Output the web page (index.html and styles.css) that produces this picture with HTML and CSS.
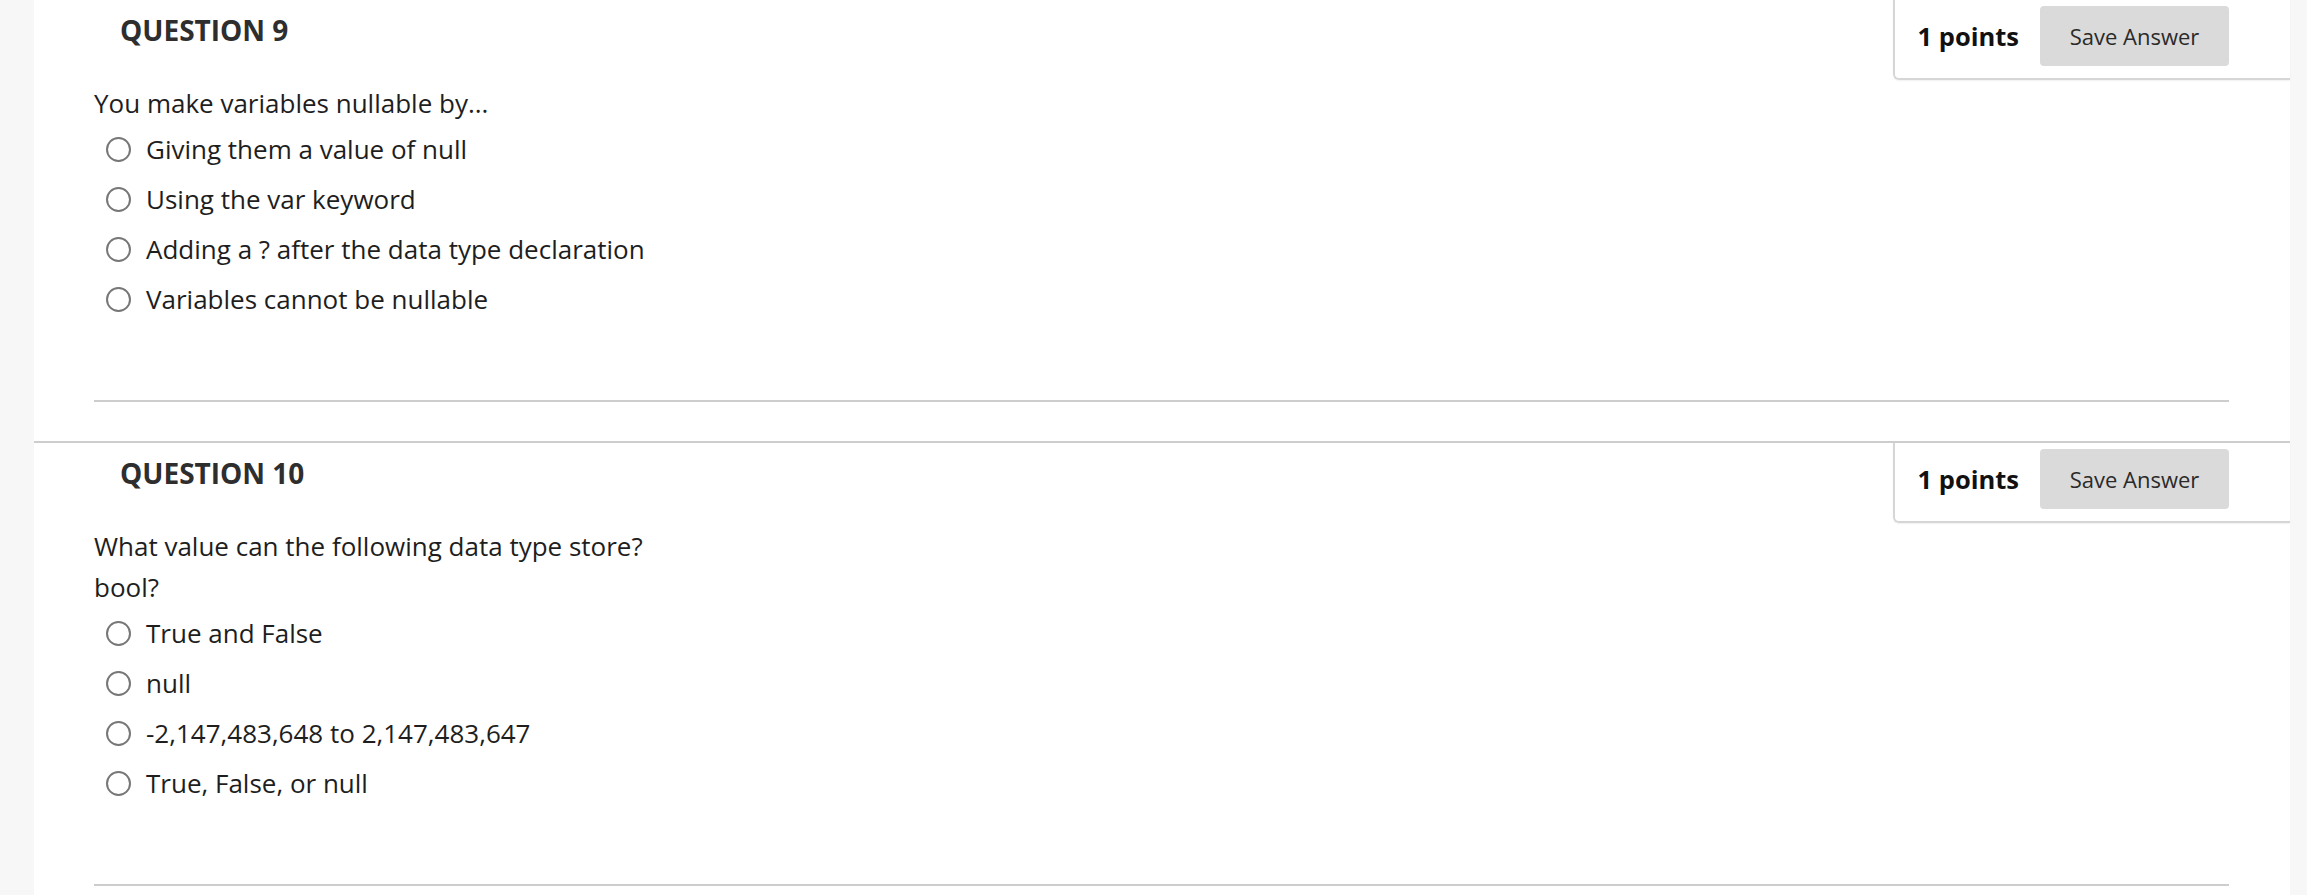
FILE: index.html
```html
<!DOCTYPE html>
<html>
<head>
<meta charset="utf-8">
<link rel="stylesheet" href="styles.css">
</head>
<body>
<div class="quiz">
  <section class="question">
    <div class="q-head">
      <h3 class="q-title">QUESTION 9</h3>
      <div class="q-points">
        <span class="pts">1 points</span>
        <button class="save">Save Answer</button>
      </div>
    </div>
    <div class="q-body">
      <p class="q-text">You make variables nullable by...</p>
      <ul class="options">
        <li><span class="radio"></span><span>Giving them a value of null</span></li>
        <li><span class="radio"></span><span>Using the var keyword</span></li>
        <li><span class="radio"></span><span>Adding a ? after the data type declaration</span></li>
        <li><span class="radio"></span><span>Variables cannot be nullable</span></li>
      </ul>
      <hr class="q-rule">
    </div>
  </section>
  <section class="question">
    <div class="q-head">
      <h3 class="q-title">QUESTION 10</h3>
      <div class="q-points">
        <span class="pts">1 points</span>
        <button class="save">Save Answer</button>
      </div>
    </div>
    <div class="q-body">
      <p class="q-text">What value can the following data type store?</p>
      <p class="q-text">bool?</p>
      <ul class="options">
        <li><span class="radio"></span><span>True and False</span></li>
        <li><span class="radio"></span><span>null</span></li>
        <li><span class="radio"></span><span>-2,147,483,648 to 2,147,483,647</span></li>
        <li><span class="radio"></span><span>True, False, or null</span></li>
      </ul>
      <hr class="q-rule">
    </div>
  </section>
</div>
</body>
</html>
```
FILE: styles.css
```css
html, body {
  margin: 0;
  padding: 0;
  background: #f7f7f7;
  height: 100%;
  overflow: hidden;
}
body {
  font-family: "Open Sans", "Liberation Sans", sans-serif;
  color: #1e1e1e;
}
.quiz {
  margin-left: 34px;
  margin-top: -2px;
  width: 2256px;
  min-height: 900px;
  background: #fff;
}
.question {
  border-top: 2px solid #cdcdcd;
  padding-bottom: 39px;
}
.q-head {
  display: flex;
  justify-content: space-between;
  align-items: flex-start;
}
.q-title {
  margin: 0;
  padding: 11px 0 0 86px;
  font-size: 28px;
  line-height: 38px;
  font-weight: 700;
  color: #2e2e2e;
}
.q-points {
  display: flex;
  align-items: center;
  gap: 21px;
  padding: 6px 61px 12px 23px;
  border-left: 2px solid #d6d6d6;
  border-bottom: 2px solid #d6d6d6;
  border-bottom-left-radius: 6px;
  box-shadow: 0 1px 2px rgba(0,0,0,0.06);
}
.pts {
  font-size: 25.5px;
  font-weight: 700;
  color: #111;
}
.save {
  width: 189px;
  height: 60px;
  border: none;
  border-radius: 4px;
  background: #dadada;
  color: #2a2a2a;
  font-family: "Open Sans", "Liberation Sans", sans-serif;
  font-size: 22px;
  padding: 0;
}
.q-body {
  padding: 3px 61px 0 60px;
}
.q-text {
  margin: 0;
  font-size: 26px;
  line-height: 41px;
}
.options {
  list-style: none;
  margin: 0;
  padding: 0 0 0 12px;
}
.options li {
  display: flex;
  align-items: center;
  gap: 15px;
  height: 50px;
  font-size: 26px;
}
.radio {
  width: 21px;
  height: 21px;
  border: 2px solid #777;
  border-radius: 50%;
  flex: none;
}
.q-rule {
  margin: 76px 0 0 0;
  border: none;
  border-top: 2px solid #cdcdcd;
  height: 0;
}
```
